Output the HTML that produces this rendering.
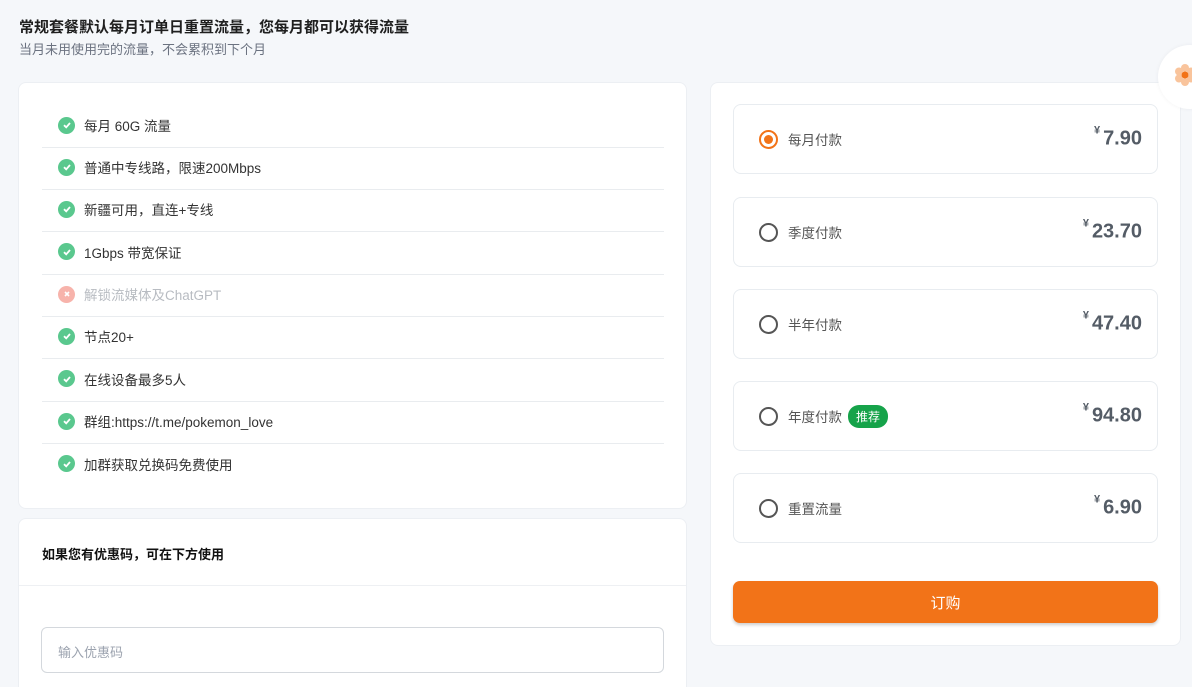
<!DOCTYPE html>
<html><head><meta charset="utf-8"><style>
*{box-sizing:border-box;margin:0;padding:0}
html,body{width:1192px;height:687px;overflow:hidden}
body{background:#f5f7fa;font-family:"Liberation Sans","Noto Sans CJK SC",sans-serif;position:relative;color:#222}
.t1{position:absolute;left:19px;top:16px;font-size:15px;font-weight:bold;color:#1f1f1f}
.t2{position:absolute;left:19px;top:39px;font-size:13px;color:#6b7280}
.card{position:absolute;background:#fff;border:1px solid #eceff3;border-radius:8px}
.row{position:absolute;left:23px;width:622px;height:42px;border-bottom:1px solid #e9ecef;font-size:13.5px;color:#333;display:flex;align-items:center;padding-bottom:3px}
.ic{width:17px;height:17px;border-radius:50%;background:#5ac88e;margin:0 9px 0 16px;display:flex;align-items:center;justify-content:center}
.x{background:#f7b3ab}
.dis{color:#b8bcc2}
.opt{position:absolute;left:22px;width:425px;height:70px;border:1px solid #e8ecf0;border-radius:8px;display:flex;align-items:center}
.rad{width:19px;height:19px;border:2px solid #555;border-radius:50%;margin-left:25px;margin-right:10px}
.on{border-color:#f27318;display:flex;align-items:center;justify-content:center}
.on::after{content:"";width:9px;height:9px;border-radius:50%;background:#f27318}
.lab{font-size:13.5px;color:#555}
.price{position:absolute;right:15px;top:50%;transform:translateY(-50%);font-size:20px;font-weight:bold;color:#545c66}
.price small{font-size:11px;vertical-align:top;position:relative;top:-3px;margin-right:3px}
.tag{background:#16a34a;color:#fff;font-size:12px;border-radius:11px;padding:3px 8px;margin-left:6px}
</style></head><body>
<div class="t1">常规套餐默认每月订单日重置流量，您每月都可以获得流量</div>
<div class="t2">当月未用使用完的流量，不会累积到下个月</div>

<div class="card" style="left:18px;top:82px;width:669px;height:427px">
<div style="position:absolute;left:0;top:23px">
<div class="row" style="top:0"><span class="ic"><svg width="10" height="10" viewBox="0 0 10 10"><path d="M2 5.2L4.2 7.3 8 3" stroke="#fff" stroke-width="1.8" fill="none"/></svg></span>每月 60G 流量</div>
<div class="row" style="top:42px"><span class="ic"><svg width="10" height="10" viewBox="0 0 10 10"><path d="M2 5.2L4.2 7.3 8 3" stroke="#fff" stroke-width="1.8" fill="none"/></svg></span>普通中专线路，限速200Mbps</div>
<div class="row" style="top:84px"><span class="ic"><svg width="10" height="10" viewBox="0 0 10 10"><path d="M2 5.2L4.2 7.3 8 3" stroke="#fff" stroke-width="1.8" fill="none"/></svg></span>新疆可用，直连+专线</div>
<div class="row" style="top:126px;height:43px"><span class="ic"><svg width="10" height="10" viewBox="0 0 10 10"><path d="M2 5.2L4.2 7.3 8 3" stroke="#fff" stroke-width="1.8" fill="none"/></svg></span>1Gbps 带宽保证</div>
<div class="row dis" style="top:169px"><span class="ic x"><svg width="10" height="10" viewBox="0 0 10 10"><path d="M3 3L7 7M7 3L3 7" stroke="#fff" stroke-width="1.6"/></svg></span>解锁流媒体及ChatGPT</div>
<div class="row" style="top:211px"><span class="ic"><svg width="10" height="10" viewBox="0 0 10 10"><path d="M2 5.2L4.2 7.3 8 3" stroke="#fff" stroke-width="1.8" fill="none"/></svg></span>节点20+</div>
<div class="row" style="top:253px;height:43px"><span class="ic"><svg width="10" height="10" viewBox="0 0 10 10"><path d="M2 5.2L4.2 7.3 8 3" stroke="#fff" stroke-width="1.8" fill="none"/></svg></span>在线设备最多5人</div>
<div class="row" style="top:296px"><span class="ic"><svg width="10" height="10" viewBox="0 0 10 10"><path d="M2 5.2L4.2 7.3 8 3" stroke="#fff" stroke-width="1.8" fill="none"/></svg></span>群组:https://t.me/pokemon_love</div>
<div class="row" style="top:338px;border:none"><span class="ic"><svg width="10" height="10" viewBox="0 0 10 10"><path d="M2 5.2L4.2 7.3 8 3" stroke="#fff" stroke-width="1.8" fill="none"/></svg></span>加群获取兑换码免费使用</div>
</div></div>

<div class="card" style="left:18px;top:518px;width:669px;height:190px">
<div style="position:absolute;left:23px;top:25px;font-size:13px;font-weight:bold;color:#111">如果您有优惠码，可在下方使用</div>
<div style="position:absolute;left:0;right:0;top:66px;border-top:1px solid #eef0f3"></div>
<div style="position:absolute;left:22px;top:108px;width:623px;height:46px;border:1px solid #d4d8dd;border-radius:6px;padding:14px 16px;font-size:13px;color:#9ca3af">输入优惠码</div>
</div>

<div class="card" style="left:710px;top:82px;width:471px;height:564px">
<div class="opt" style="top:21px"><span class="rad on"></span><span class="lab">每月付款</span><span class="price"><small>¥</small>7.90</span></div>
<div class="opt" style="top:114px"><span class="rad"></span><span class="lab">季度付款</span><span class="price"><small>¥</small>23.70</span></div>
<div class="opt" style="top:206px"><span class="rad"></span><span class="lab">半年付款</span><span class="price"><small>¥</small>47.40</span></div>
<div class="opt" style="top:298px"><span class="rad"></span><span class="lab">年度付款</span><span class="tag">推荐</span><span class="price"><small>¥</small>94.80</span></div>
<div class="opt" style="top:390px"><span class="rad"></span><span class="lab">重置流量</span><span class="price"><small>¥</small>6.90</span></div>
<div style="position:absolute;left:22px;top:498px;width:425px;height:42px;background:#f27318;border-radius:7px;color:#fff;font-size:15px;display:flex;align-items:center;justify-content:center;box-shadow:0 2px 3px rgba(0,0,0,.2)">订购</div>
</div>

<div style="position:absolute;left:1158px;top:45px;width:64px;height:64px;border-radius:50%;background:#fff;box-shadow:0 0 4px rgba(0,0,0,.05)"></div>
<svg style="position:absolute;left:1175px;top:64px" width="20" height="22" viewBox="0 0 20 22"><g fill="#f9c49c"><circle cx="10" cy="4" r="4"/><circle cx="10" cy="18" r="4"/><circle cx="4" cy="7.5" r="4"/><circle cx="16" cy="7.5" r="4"/><circle cx="4" cy="14.5" r="4"/><circle cx="16" cy="14.5" r="4"/></g><circle cx="10" cy="11" r="3.5" fill="#f27318"/></svg>
</body></html>
